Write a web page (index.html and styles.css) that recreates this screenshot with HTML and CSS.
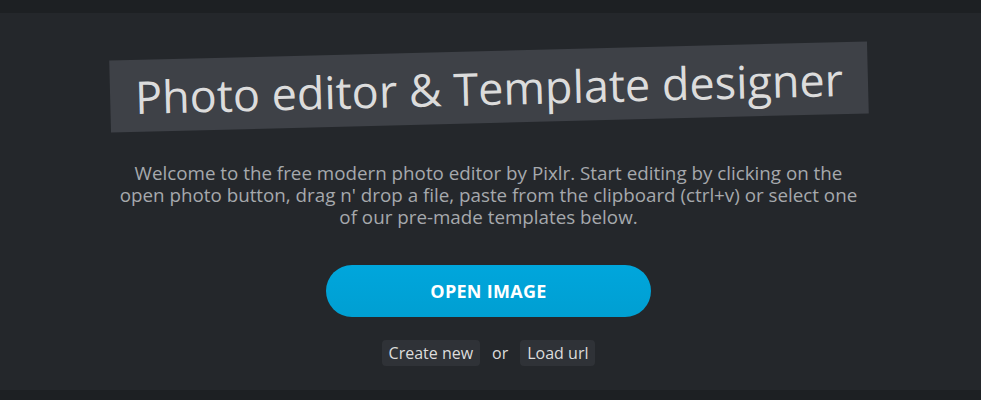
FILE: index.html
```html
<!DOCTYPE html>
<html lang="en">

<head>
    <meta charset="UTF-8">
    <meta name="viewport" content="width=device-width, initial-scale=1.0">
    <title>Pixlr Editor</title>
    <link rel="stylesheet" href="styles.css">
</head>

<body>
    <div class="topbar"></div>
    <div class="splash">
        <div class="title-wrap">
            <h1 class="title">Photo editor &amp; Template designer</h1>
        </div>
        <p class="intro">Welcome to the free modern photo editor by Pixlr. Start editing by clicking on the open photo button, drag n' drop a file, paste from the clipboard (ctrl+v) or select one of our pre-made templates below.</p>
        <button class="open-btn">OPEN IMAGE</button>
        <div class="links">
            <a class="link-btn" href="#">Create new</a>
            <span class="or">or</span>
            <a class="link-btn" href="#">Load url</a>
        </div>
    </div>
    <div class="bottombar"></div>
</body>

</html>
```
FILE: styles.css
```css
body {
    font-family: "Open Sans", Arial, sans-serif;
    margin: 0;
    padding: 0;
    background-color: #24272b;
    height: 400px;
    overflow: hidden;
    display: flex;
    flex-direction: column;
}

.topbar {
    height: 13px;
    background-color: #1d2023;
}

.splash {
    height: 377px;
    padding-right: 4px;
    display: flex;
    flex-direction: column;
    align-items: center;
}

.title-wrap {
    margin-top: 38px;
    width: 758px;
    height: 72px;
    background-color: #3e4147;
    transform: rotate(-1.45deg);
    display: flex;
    align-items: center;
    justify-content: center;
}

.title {
    margin: 0;
    font-weight: 400;
    font-size: 45px;
    color: #dcdcdc;
}

.intro {
    width: 750px;
    margin: 39px 0 0;
    text-align: center;
    font-size: 18.8px;
    line-height: 22px;
    color: #a6a9ad;
}

.open-btn {
    margin-top: 37px;
    width: 325px;
    height: 52px;
    border: none;
    border-radius: 26px;
    background: linear-gradient(#00a6dc, #009fd2);
    color: #fff;
    font-family: inherit;
    font-weight: 700;
    font-size: 18px;
    letter-spacing: 0.3px;
    cursor: pointer;
}

.links {
    margin-top: 23px;
    display: flex;
    align-items: center;
    gap: 12px;
}

.link-btn {
    background-color: #2f3237;
    color: #dcdcdc;
    text-decoration: none;
    font-size: 16px;
    line-height: 26px;
    padding: 0 7px;
    border-radius: 4px;
}

.or {
    color: #dcdcdc;
    font-size: 16px;
}

.bottombar {
    height: 10px;
    background-color: #1d2023;
}
```
